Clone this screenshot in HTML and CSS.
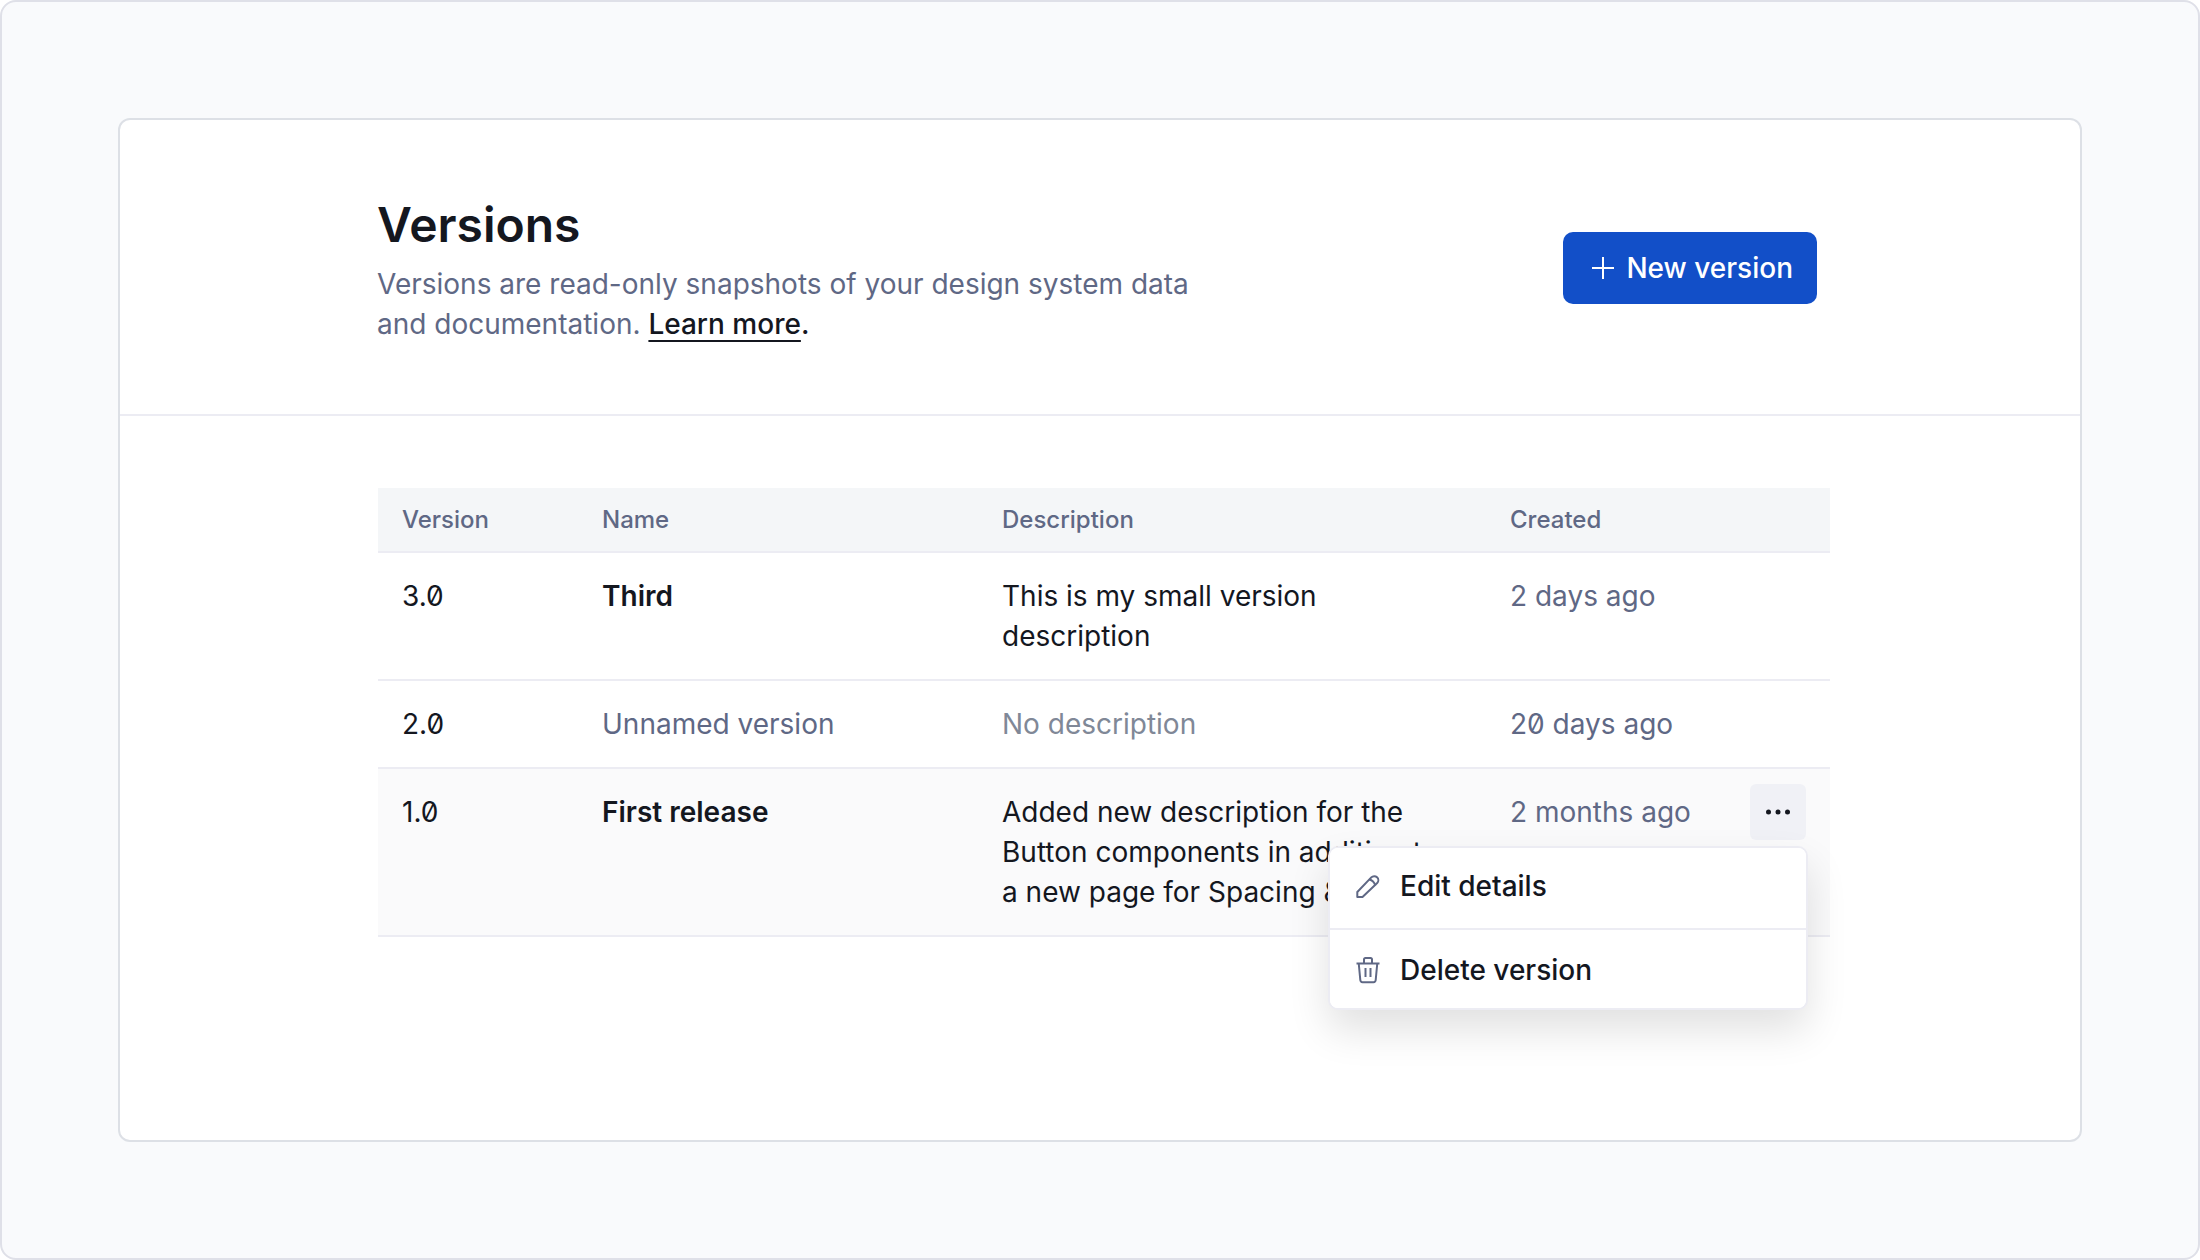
FILE: index.html
```html
<!DOCTYPE html>
<html lang="en">
<head>
  <meta charset="utf-8">
  <meta name="viewport" content="width=device-width, initial-scale=1">
  <title>Versions</title>
  <link rel="stylesheet" href="styles.css">
</head>
<body>
  <div class="frame">
    <main class="card">
      <header class="page-header">
        <div class="intro">
          <h1 class="title">Versions</h1>
          <p class="lead">Versions are read-only snapshots of your design system data and documentation. <span class="lead-action"><a class="link" href="#learn-more">Learn more</a>.</span></p>
        </div>
        <button class="new-button" type="button">
          <svg class="icon-plus" viewBox="0 0 24 24" aria-hidden="true"><path d="M12 1v22M1 12h22"/></svg>
          New version
        </button>
      </header>

      <section class="content">
        <table class="versions">
          <colgroup>
            <col class="col-version"><col class="col-name"><col class="col-description"><col><col class="col-actions">
          </colgroup>
          <thead>
            <tr>
              <th scope="col">Version</th>
              <th scope="col">Name</th>
              <th scope="col">Description</th>
              <th scope="col">Created</th>
              <td></td>
            </tr>
          </thead>
          <tbody>
            <tr>
              <td>3.0</td>
              <td class="name">Third</td>
              <td>This is my small version description</td>
              <td class="muted">2 days ago</td>
              <td></td>
            </tr>
            <tr>
              <td>2.0</td>
              <td class="muted">Unnamed version</td>
              <td class="empty">No description</td>
              <td class="muted">20 days ago</td>
              <td></td>
            </tr>
            <tr class="active">
              <td>1.0</td>
              <td class="name">First release</td>
              <td>Added new description for the<br>Button components in addition to<br>a new page for Spacing &amp;</td>
              <td class="muted">2 months ago</td>
              <td class="actions">
                <div class="menu-anchor">
                  <button class="more-button" type="button" aria-label="More actions" aria-expanded="true">
                    <svg class="icon-more" viewBox="0 0 28 28" aria-hidden="true"><circle cx="4.5" cy="14" r="2.5"/><circle cx="14" cy="14" r="2.5"/><circle cx="23.5" cy="14" r="2.5"/></svg>
                  </button>
                  <div class="menu" role="menu">
                    <button class="menu-item" type="button" role="menuitem">
                      <svg class="icon" viewBox="0 0 28 28" aria-hidden="true"><path d="M3.3 25v-5L17.300 5.400a4 4 0 0 1 5.900 5.600L8.500 25z"/><path d="M15.300 7.500q4.500 1 6 6"/></svg>
                      Edit details
                    </button>
                    <button class="menu-item" type="button" role="menuitem">
                      <svg class="icon" viewBox="0 0 28 28" aria-hidden="true"><path d="M2.500 7.500h23M10 7V3.500q0-1.500 1.500-1.500h5q1.500 0 1.500 1.500V7M4.800 8l1.500 16q.2 2.200 2.200 2.200h11q2 0 2.200-2.200L23.200 8M11.500 12v9M16.500 12v9"/></svg>
                      Delete version
                    </button>
                  </div>
                </div>
              </td>
            </tr>
          </tbody>
        </table>
      </section>
    </main>
  </div>
</body>
</html>
```
FILE: styles.css
```css
*,
*::before,
*::after {
  box-sizing: border-box;
}

:root {
  --ink: #14171f;
  --muted: #5f6885;
  --faint: #808897;
  --line: #ececf3;
  --accent: #124fc8;
}

body {
  margin: 0;
  background: #fff;
  color: var(--ink);
  font-family: Inter, "Liberation Sans", sans-serif;
  font-size: 28px;
  line-height: 40px;
  font-optical-sizing: none;
  font-feature-settings: "zero";
}

button {
  border: 0;
  font: inherit;
  font-weight: 500;
  cursor: pointer;
}

.frame {
  display: flex;
  min-height: 100vh;
  padding: 116px;
  border: 2px solid #dfe0e8;
  border-radius: 16px;
  background: #f9fafc;
}

.card {
  flex: 1;
  border: 2px solid #dde0e6;
  border-radius: 12px;
  background: #fff;
}

.page-header {
  display: flex;
  align-items: center;
  justify-content: space-between;
  padding: 72px 263px 70px 257px;
  border-bottom: 2px solid var(--line);
}

.intro {
  max-width: 840px;
}

.title {
  margin: 0 0 6px;
  font-size: 48px;
  font-weight: 600;
  line-height: 66px;
}

.lead {
  margin: 0;
  color: var(--muted);
}

.lead-action {
  color: var(--ink);
  font-weight: 500;
}

.link {
  color: inherit;
  text-decoration: underline 2px;
  text-decoration-skip-ink: none;
  text-underline-offset: 6px;
}

.new-button {
  display: flex;
  align-items: center;
  gap: 11px;
  padding: 16px 24px 16px 28px;
  border-radius: 10px;
  background: var(--accent);
  color: #fff;
  white-space: nowrap;
}

.icon-plus {
  width: 24px;
  height: 24px;
  fill: none;
  stroke: currentColor;
  stroke-width: 2;
}

.content {
  padding: 72px 250px 72px 258px;
}

.versions {
  width: 100%;
  border-collapse: separate;
  border-spacing: 0;
  table-layout: fixed;
}

.col-version {
  width: 200px;
}

.col-name {
  width: 400px;
}

.col-description {
  width: 508px;
}

.col-actions {
  width: 80px;
}

.versions th,
.versions td {
  padding: 23px 24px;
  border-bottom: 2px solid var(--line);
  text-align: left;
  vertical-align: top;
}

.versions thead th,
.versions thead td {
  padding: 16px 24px;
  background: #f4f6f8;
  color: var(--muted);
  font-size: 24px;
  font-weight: 500;
  line-height: 31px;
}

.versions .name {
  font-weight: 600;
}

.versions .muted {
  color: var(--muted);
}

.versions .empty {
  color: var(--faint);
}

.active td {
  background: #fafafb;
}

.versions .actions {
  padding: 15px 24px 15px 0;
}

.menu-anchor {
  position: relative;
}

.more-button {
  display: flex;
  align-items: center;
  justify-content: center;
  width: 56px;
  height: 56px;
  padding: 0;
  border-radius: 6px;
  background: #f0f1f6;
  color: var(--ink);
}

.icon-more {
  width: 28px;
  height: 28px;
  fill: currentColor;
}

.menu {
  position: absolute;
  top: 62px;
  right: -2px;
  width: 480px;
  overflow: hidden;
  border: 2px solid var(--line);
  border-radius: 10px;
  background: #fff;
  box-shadow: 0 20px 40px rgba(0, 0, 0, 0.12);
}

.menu-item {
  display: flex;
  align-items: center;
  gap: 18px;
  width: 100%;
  padding: 18px 24px 22px;
  background: #fff;
  color: var(--ink);
}

.menu-item + .menu-item {
  padding: 20px 24px 18px;
  border-top: 2px solid var(--line);
}

.icon {
  width: 28px;
  height: 28px;
  fill: none;
  stroke: var(--muted);
  stroke-width: 2;
  stroke-linejoin: round;
}
```
